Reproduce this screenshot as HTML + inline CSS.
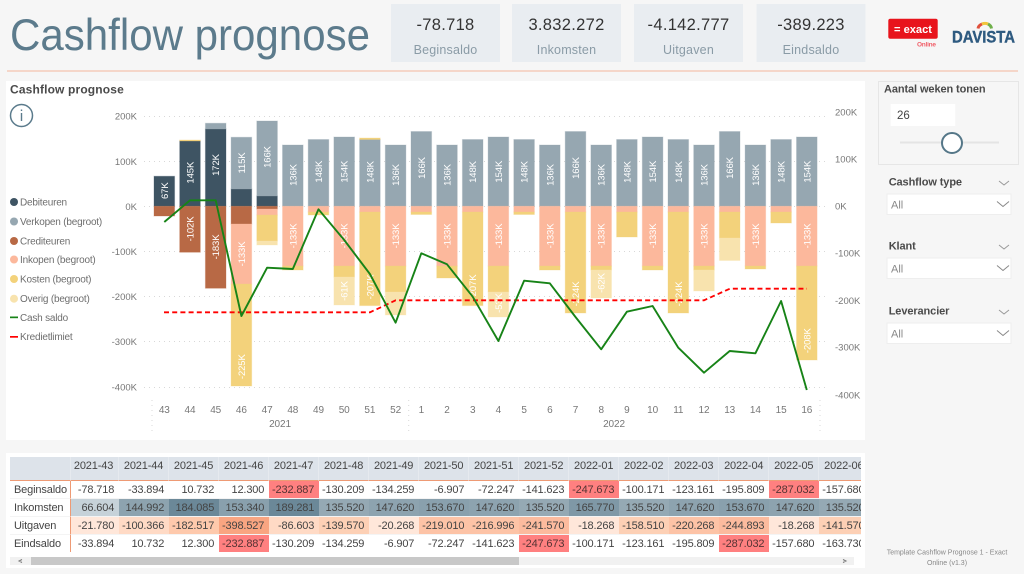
<!DOCTYPE html>
<html><head><meta charset="utf-8"><title>Cashflow prognose</title>
<style>
html,body{margin:0;padding:0;background:#f6f6f6}
body{width:1024px;height:574px;position:relative;overflow:hidden;font-family:"Liberation Sans",sans-serif}
svg{position:absolute;left:0;top:0;filter:blur(.3px)}
svg text{font-family:"Liberation Sans",sans-serif}
.d{fill:#3e5463;stroke:#3e5463}.g{fill:#96a7b1;stroke:#96a7b1}.c{fill:#b86945;stroke:#b86945}
.i{fill:#fcb89c;stroke:#fcb89c}.k{fill:#f3d27b;stroke:#f3d27b}.o{fill:#f8e3ae;stroke:#f8e3ae}
.d,.g,.c,.i,.k,.o{stroke-width:1;stroke-opacity:.3}
.l text{fill:#fff;font-size:9.5px;text-anchor:middle;letter-spacing:-.1px}
.ax text{fill:#777;font-size:9.5px}
.wk text{fill:#777;font-size:10px;text-anchor:middle;letter-spacing:-.1px}
.leg text{fill:#6e6e6e;font-size:10px;letter-spacing:-.2px}
.v{fill:#333;font-size:16.5px;text-anchor:middle;letter-spacing:.3px}
.n{fill:#8a9ba6;font-size:12.5px;text-anchor:middle;letter-spacing:.2px}
.h{fill:#4a4a4a;font-size:11px;font-weight:bold;letter-spacing:-.1px}
.all{fill:#888;font-size:11px}
#tw{position:absolute;left:10px;top:457px;width:851px;height:95px;overflow:hidden;filter:blur(.3px)}
table{border-collapse:separate;border-spacing:0;table-layout:fixed;width:859px;font-size:11px;color:#444;letter-spacing:-.15px}
td,th{padding:0 4.5px 0 0;text-align:right;font-weight:normal;white-space:nowrap;overflow:hidden;box-sizing:border-box}
td{height:17.6px;padding-top:2px;line-height:15px;border-bottom:1px solid #f4f4f4}
th{height:24px;line-height:19px;padding-bottom:4px;background:#dde3ea;border-bottom:1px solid #ee9a74;border-right:1px solid #e6eaef}
td:first-child{text-align:left;padding-left:4px;border-right:1px solid #ee9a74;color:#444}
.r{background:#ff8080;color:#553333}
.a0{background:#c6d2d9}.a1{background:#8da3af}.a2{background:#6b8898}.a3{background:#89a0ad}.a4{background:#95a9b4}.a5{background:#7f98a6}
.b0{background:#ffe7da}.b1{background:#ffdac5}.b2{background:#fec9ac}.b3{background:#f9a581}.b4{background:#fdd0b5}.b5{background:#fdc3a6}.b6{background:#fcbb9e}
</style></head><body>
<svg width="1024" height="574" viewBox="0 0 1024 574">
<rect x="6" y="81" width="859" height="359" fill="#fff"/>
<rect x="6" y="453" width="859" height="115" fill="#fff"/>
<rect x="7" y="70.5" width="1011" height="1" fill="#f4b79c"/>
<text x="10" y="50" font-size="44.5" fill="#5c7b8c" textLength="360" lengthAdjust="spacingAndGlyphs">Cashflow prognose</text>
<g fill="#e9edf1"><rect x="391" y="4" width="109" height="58"/><rect x="512" y="4" width="109" height="58"/><rect x="634" y="4" width="109" height="58"/><rect x="756.5" y="4" width="109" height="58"/></g>
<text class="v" x="445.5" y="30">-78.718</text><text class="n" x="445.5" y="54">Beginsaldo</text>
<text class="v" x="566.5" y="30">3.832.272</text><text class="n" x="566.5" y="54">Inkomsten</text>
<text class="v" x="688.5" y="30">-4.142.777</text><text class="n" x="688.5" y="54">Uitgaven</text>
<text class="v" x="811" y="30">-389.223</text><text class="n" x="811" y="54">Eindsaldo</text>
<rect x="888.3" y="18.7" width="49.4" height="20" rx="2" fill="#e8141c"/>
<text x="894" y="33" font-size="11" font-weight="bold" fill="#fff" textLength="38" lengthAdjust="spacingAndGlyphs">= exact</text>
<text x="917" y="46.5" font-size="6.5" font-weight="bold" fill="#f0606a" textLength="19">Online</text>
<text x="952" y="42.7" font-size="16.5" font-weight="bold" fill="#2e5a80" stroke="#2e5a80" stroke-width=".4" textLength="63" lengthAdjust="spacingAndGlyphs">DAVISTA</text>
<path d="M978 28.500a7 6 0 0 1 4-4.500" fill="none" stroke="#e0503c" stroke-width="3"/><path d="M982 24a7 6 0 0 1 6 0" fill="none" stroke="#f2c53c" stroke-width="3"/><path d="M988 24a7 6 0 0 1 3.500 4.500" fill="none" stroke="#6fb04a" stroke-width="3"/>
<text class="h" x="10" y="93.500" style="font-size:12px;letter-spacing:.15px">Cashflow prognose</text>
<circle cx="21.500" cy="115.500" r="11" fill="none" stroke="#5b7b8c" stroke-width="1.500"/><rect x="20.800" y="113" width="1.400" height="8" fill="#5b7b8c"/><rect x="20.800" y="109.500" width="1.400" height="1.500" fill="#5b7b8c"/>
<g stroke="#d8d8d8" stroke-width="1" stroke-dasharray="1 4"><path d="M144 116.500H825M144 161.500H825M144 206.500H825M144 251.500H825M144 296.500H825M144 341.500H825M144 387.500H825"/><path d="M152 400V431M408.700 400V431M820 400V431"/></g>
<g class="ax" text-anchor="end"><text x="137" y="119.500">200K</text><text x="137" y="165">100K</text><text x="137" y="210">0K</text><text x="137" y="255">-100K</text><text x="137" y="300">-200K</text><text x="137" y="345">-300K</text><text x="137" y="390.500">-400K</text></g>
<g class="ax"><text x="835" y="115.500">200K</text><text x="835" y="162.500">100K</text><text x="835" y="209.500">0K</text><text x="835" y="256.500">-100K</text><text x="835" y="304">-200K</text><text x="835" y="350.500">-300K</text><text x="835" y="398.500">-400K</text></g>
<path class="d" d="M154 176.300h20.600V206.300h-20.600zM179.700 141h20.600V206.300h-20.600zM205.400 129h20.600V206.300h-20.600zM231.100 189h20.600V206.300h-20.600zM256.800 196h20.600V206.300h-20.600z"/>
<path class="g" d="M205.400 123.300h20.600V129h-20.600zM231.100 137.300h20.600V189h-20.600zM256.800 121h20.600V196h-20.600zM282.500 145h20.600V206.300h-20.600zM308.200 139.500h20.600V206.300h-20.600zM333.900 137h20.600V206.300h-20.600zM359.600 139.500h20.600V206.300h-20.600zM385.300 145h20.600V206.300h-20.600zM411 131.500h20.600V206.300h-20.600zM436.700 145h20.600V206.300h-20.600zM462.400 139.500h20.600V206.300h-20.600zM488.100 137h20.600V206.300h-20.600zM513.800 139.500h20.600V206.300h-20.600zM539.500 145h20.600V206.300h-20.600zM565.200 131.500h20.600V206.300h-20.600zM590.900 145h20.600V206.300h-20.600zM616.600 139.500h20.600V206.300h-20.600zM642.300 137h20.600V206.300h-20.600zM668 139.500h20.600V206.300h-20.600zM693.700 145h20.600V206.300h-20.600zM719.400 131.500h20.600V206.300h-20.600zM745.100 145h20.600V206.300h-20.600zM770.800 139.500h20.600V206.300h-20.600zM796.500 137h20.600V206.300h-20.600z"/>
<path class="c" d="M154 206.300h20.600V216h-20.600zM179.700 206.300h20.600V252.300h-20.600zM205.400 206.300h20.600V288.300h-20.600zM231.100 206.300h20.600V224h-20.600zM256.800 206.300h20.600V209h-20.600z"/>
<path class="i" d="M231.100 224h20.600V284h-20.600zM256.800 209h20.600V215h-20.600zM282.500 206.300h20.600V266h-20.600zM308.200 206.300h20.600V212h-20.600zM333.900 206.300h20.600V266h-20.600zM359.600 206.300h20.600V212h-20.600zM385.300 206.300h20.600V266h-20.600zM411 206.300h20.600V212h-20.600zM436.700 206.300h20.600V266h-20.600zM462.400 206.300h20.600V212h-20.600zM488.100 206.300h20.600V266h-20.600zM513.800 206.300h20.600V212h-20.600zM539.500 206.300h20.600V266h-20.600zM565.200 206.300h20.600V212h-20.600zM590.900 206.300h20.600V266h-20.600zM616.600 206.300h20.600V212h-20.600zM642.300 206.300h20.600V266h-20.600zM668 206.300h20.600V212h-20.600zM693.700 206.300h20.600V266h-20.600zM719.400 206.300h20.600V212h-20.600zM745.100 206.300h20.600V266h-20.600zM770.800 206.300h20.600V212h-20.600zM796.500 206.300h20.600V266h-20.600z"/>
<path class="k" d="M179.700 140h20.600V141h-20.600zM359.600 138h20.600V139.500h-20.600zM231.100 284h20.600V386h-20.600zM256.800 215h20.600V241h-20.600zM282.500 266h20.600V270h-20.600zM308.200 212h20.600V215h-20.600zM333.900 266h20.600V277h-20.600zM359.600 212h20.600V305.600h-20.600zM385.300 266h20.600V292h-20.600zM411 212h20.600V214.500h-20.600zM436.700 266h20.600V278h-20.600zM462.400 212h20.600V305.600h-20.600zM488.100 266h20.600V292h-20.600zM513.800 212h20.600V214.500h-20.600zM539.500 266h20.600V270h-20.600zM565.200 212h20.600V313h-20.600zM590.900 266h20.600V270h-20.600zM616.600 212h20.600V237h-20.600zM642.300 266h20.600V270h-20.600zM668 212h20.600V313h-20.600zM693.700 266h20.600V270h-20.600zM719.400 212h20.600V238h-20.600zM745.100 266h20.600V269h-20.600zM770.800 212h20.600V223h-20.600zM796.500 266h20.600V360h-20.600z"/>
<path class="o" d="M256.800 241h20.600V245h-20.600zM333.900 277h20.600V305h-20.600zM385.300 292h20.600V315h-20.600zM488.100 292h20.600V317h-20.600zM590.900 270h20.600V298h-20.600zM693.700 270h20.600V291h-20.600zM719.400 238h20.600V260.500h-20.600z"/>
<g class="l">
<text transform="translate(167.800,190.700) rotate(-90)">67K</text>
<text transform="translate(193.500,172.700) rotate(-90)">145K</text>
<text transform="translate(193.500,229) rotate(-90)">-102K</text>
<text transform="translate(219.200,165) rotate(-90)">172K</text>
<text transform="translate(219.200,247) rotate(-90)">-183K</text>
<text transform="translate(244.900,163) rotate(-90)">115K</text>
<text transform="translate(244.900,254) rotate(-90)">-133K</text>
<text transform="translate(244.900,366.700) rotate(-90)">-225K</text>
<text transform="translate(270.600,157) rotate(-90)">166K</text>
<text transform="translate(296.300,175) rotate(-90)">136K</text>
<text transform="translate(296.300,236) rotate(-90)">-133K</text>
<text transform="translate(322,171.700) rotate(-90)">148K</text>
<text transform="translate(347.700,171.700) rotate(-90)">154K</text>
<text transform="translate(347.700,236) rotate(-90)">-133K</text>
<text transform="translate(347.700,291) rotate(-90)">-61K</text>
<text transform="translate(373.400,172) rotate(-90)">148K</text>
<text transform="translate(373.400,287) rotate(-90)">-207K</text>
<text transform="translate(399.100,175) rotate(-90)">136K</text>
<text transform="translate(399.100,236) rotate(-90)">-133K</text>
<text transform="translate(424.800,168) rotate(-90)">166K</text>
<text transform="translate(450.500,175) rotate(-90)">136K</text>
<text transform="translate(450.500,236) rotate(-90)">-133K</text>
<text transform="translate(476.200,172) rotate(-90)">148K</text>
<text transform="translate(476.200,287) rotate(-90)">-207K</text>
<text transform="translate(501.900,171.700) rotate(-90)">154K</text>
<text transform="translate(501.900,236) rotate(-90)">-133K</text>
<text transform="translate(501.900,303) rotate(-90)">-53K</text>
<text transform="translate(527.600,172) rotate(-90)">148K</text>
<text transform="translate(553.300,175) rotate(-90)">136K</text>
<text transform="translate(553.300,236) rotate(-90)">-133K</text>
<text transform="translate(579,168) rotate(-90)">166K</text>
<text transform="translate(579,294) rotate(-90)">-224K</text>
<text transform="translate(604.700,175) rotate(-90)">136K</text>
<text transform="translate(604.700,236) rotate(-90)">-133K</text>
<text transform="translate(604.700,283) rotate(-90)">-62K</text>
<text transform="translate(630.400,172) rotate(-90)">148K</text>
<text transform="translate(656.100,171.700) rotate(-90)">154K</text>
<text transform="translate(656.100,236) rotate(-90)">-133K</text>
<text transform="translate(681.800,172) rotate(-90)">148K</text>
<text transform="translate(681.800,294) rotate(-90)">-224K</text>
<text transform="translate(707.500,175) rotate(-90)">136K</text>
<text transform="translate(707.500,236) rotate(-90)">-133K</text>
<text transform="translate(733.200,168) rotate(-90)">166K</text>
<text transform="translate(758.900,175) rotate(-90)">136K</text>
<text transform="translate(758.900,236) rotate(-90)">-133K</text>
<text transform="translate(784.600,172) rotate(-90)">148K</text>
<text transform="translate(810.300,171.700) rotate(-90)">154K</text>
<text transform="translate(810.300,236) rotate(-90)">-133K</text>
<text transform="translate(810.300,340.700) rotate(-90)">-208K</text>
</g>
<polyline fill="none" stroke="#f00" stroke-width="1.800" stroke-dasharray="5 3.200" points="164,312.300 370,312.300 395.700,300.300 704,300.300 729.800,288.700 807,288.700"/>
<polyline fill="none" stroke="#178317" stroke-width="1.900" stroke-linejoin="round" points="164.300,222 190,200.300 215.700,200.300 241.400,316 267.100,267.700 292.800,269 318.500,209.300 344.200,240 369.900,274 395.600,322.700 421.300,253.300 447,264.300 472.700,296.700 498.400,341 524.100,280.700 549.800,283.300 575.500,317 601.200,349.300 626.900,311.700 652.600,306 678.300,347.700 704,372.700 729.700,351 755.400,353.300 781.100,301 806.800,390"/>
<g class="leg">
<circle cx="14" cy="202" r="4" fill="#3e5463"/><text x="20" y="205.500">Debiteuren</text>
<circle cx="14" cy="221.500" r="4" fill="#96a7b1"/><text x="20" y="225">Verkopen (begroot)</text>
<circle cx="14" cy="241" r="4" fill="#b86945"/><text x="20" y="244.500">Crediteuren</text>
<circle cx="14" cy="259.500" r="4" fill="#fcb89c"/><text x="20" y="263">Inkopen (begroot)</text>
<circle cx="14" cy="279" r="4" fill="#f3d27b"/><text x="20" y="282.500">Kosten (begroot)</text>
<circle cx="14" cy="298.700" r="4" fill="#f8e3ae"/><text x="20" y="302.200">Overig (begroot)</text>
<rect x="10" y="316.500" width="8" height="1.700" fill="#178317"/><text x="20" y="321">Cash saldo</text>
<rect x="10" y="336" width="8" height="1.700" fill="#f00"/><text x="20" y="340">Kredietlimiet</text>
</g>
<g class="wk">
<text x="164.300" y="413">43</text><text x="190" y="413">44</text><text x="215.700" y="413">45</text><text x="241.400" y="413">46</text><text x="267.100" y="413">47</text><text x="292.800" y="413">48</text><text x="318.500" y="413">49</text><text x="344.200" y="413">50</text><text x="369.900" y="413">51</text><text x="395.600" y="413">52</text><text x="421.300" y="413">1</text><text x="447" y="413">2</text><text x="472.700" y="413">3</text><text x="498.400" y="413">4</text><text x="524.100" y="413">5</text><text x="549.800" y="413">6</text><text x="575.500" y="413">7</text><text x="601.200" y="413">8</text><text x="626.900" y="413">9</text><text x="652.600" y="413">10</text><text x="678.300" y="413">11</text><text x="704" y="413">12</text><text x="729.700" y="413">13</text><text x="755.400" y="413">14</text><text x="781.100" y="413">15</text><text x="806.800" y="413">16</text>
<text x="280" y="427">2021</text><text x="614" y="427">2022</text>
</g>
<rect x="878.500" y="81.500" width="140" height="83" fill="#f6f6f6" stroke="#e6e6e6"/>
<text class="h" x="884" y="92.500">Aantal weken tonen</text>
<rect x="890.700" y="104" width="64.500" height="22" fill="#fff"/>
<text x="897" y="119" font-size="11.500" fill="#444">26</text>
<rect x="900" y="141.500" width="99" height="2" fill="#e4e4e4"/>
<circle cx="952" cy="143" r="10" fill="#fff" stroke="#557788" stroke-width="2"/>
<text class="h" x="888.700" y="185.500">Cashflow type</text>
<path d="M999 181l5 4 5-4" fill="none" stroke="#999" stroke-width="1"/>
<rect x="887" y="194" width="124" height="20.500" fill="#fff" stroke="#eee"/>
<text class="all" x="891" y="208.500">All</text>
<path d="M997 201.500l6 5 6-5" fill="none" stroke="#888" stroke-width="1"/>
<text class="h" x="888.700" y="249.500">Klant</text>
<path d="M999 245l5 4 5-4" fill="none" stroke="#999" stroke-width="1"/>
<rect x="887" y="258" width="124" height="20.500" fill="#fff" stroke="#eee"/>
<text class="all" x="891" y="272.500">All</text>
<path d="M997 265.500l6 5 6-5" fill="none" stroke="#888" stroke-width="1"/>
<text class="h" x="888.700" y="314.500">Leverancier</text>
<path d="M999 310l5 4 5-4" fill="none" stroke="#999" stroke-width="1"/>
<rect x="887" y="323" width="124" height="20.500" fill="#fff" stroke="#eee"/>
<text class="all" x="891" y="337.500">All</text>
<path d="M997 330.500l6 5 6-5" fill="none" stroke="#888" stroke-width="1"/>
<text x="947" y="554.500" font-size="7" fill="#888" text-anchor="middle">Template Cashflow Prognose 1 - Exact</text>
<text x="947" y="565" font-size="7" fill="#888" text-anchor="middle">Online (v1.3)</text>
<rect x="10" y="557" width="844" height="8" fill="#f1f1f1"/>
<rect x="31" y="557" width="488" height="8" fill="#c8c8c8"/>
<path d="M22 559.500l-3 1.500 3 1.500M843 559.500l3 1.500-3 1.500" fill="none" stroke="#777" stroke-width="1"/>
</svg>
<div id="tw"><table>
<colgroup><col style="width:60.5px"><col style="width:48.2px"><col span="15" style="width:50.02px"></colgroup>
<tr><th></th><th>2021-43</th><th>2021-44</th><th>2021-45</th><th>2021-46</th><th>2021-47</th><th>2021-48</th><th>2021-49</th><th>2021-50</th><th>2021-51</th><th>2021-52</th><th>2022-01</th><th>2022-02</th><th>2022-03</th><th>2022-04</th><th>2022-05</th><th>2022-06</th></tr>
<tr><td>Beginsaldo</td><td>-78.718</td><td>-33.894</td><td>10.732</td><td>12.300</td><td class="r">-232.887</td><td>-130.209</td><td>-134.259</td><td>-6.907</td><td>-72.247</td><td>-141.623</td><td class="r">-247.673</td><td>-100.171</td><td>-123.161</td><td>-195.809</td><td class="r">-287.032</td><td>-157.680</td></tr>
<tr><td>Inkomsten</td><td class="a0">66.604</td><td class="a1">144.992</td><td class="a2">184.085</td><td class="a3">153.340</td><td class="a2">189.281</td><td class="a4">135.520</td><td class="a1">147.620</td><td class="a3">153.670</td><td class="a1">147.620</td><td class="a4">135.520</td><td class="a5">165.770</td><td class="a4">135.520</td><td class="a1">147.620</td><td class="a3">153.670</td><td class="a1">147.620</td><td class="a4">135.520</td></tr>
<tr><td>Uitgaven</td><td class="b0">-21.780</td><td class="b1">-100.366</td><td class="b2">-182.517</td><td class="b3">-398.527</td><td class="b1">-86.603</td><td class="b4">-139.570</td><td class="b0">-20.268</td><td class="b5">-219.010</td><td class="b5">-216.996</td><td class="b6">-241.570</td><td class="b0">-18.268</td><td class="b4">-158.510</td><td class="b5">-220.268</td><td class="b6">-244.893</td><td class="b0">-18.268</td><td class="b4">-141.570</td></tr>
<tr><td>Eindsaldo</td><td>-33.894</td><td>10.732</td><td>12.300</td><td class="r">-232.887</td><td>-130.209</td><td>-134.259</td><td>-6.907</td><td>-72.247</td><td>-141.623</td><td class="r">-247.673</td><td>-100.171</td><td>-123.161</td><td>-195.809</td><td class="r">-287.032</td><td>-157.680</td><td>-163.730</td></tr>
</table></div>
</body></html>
